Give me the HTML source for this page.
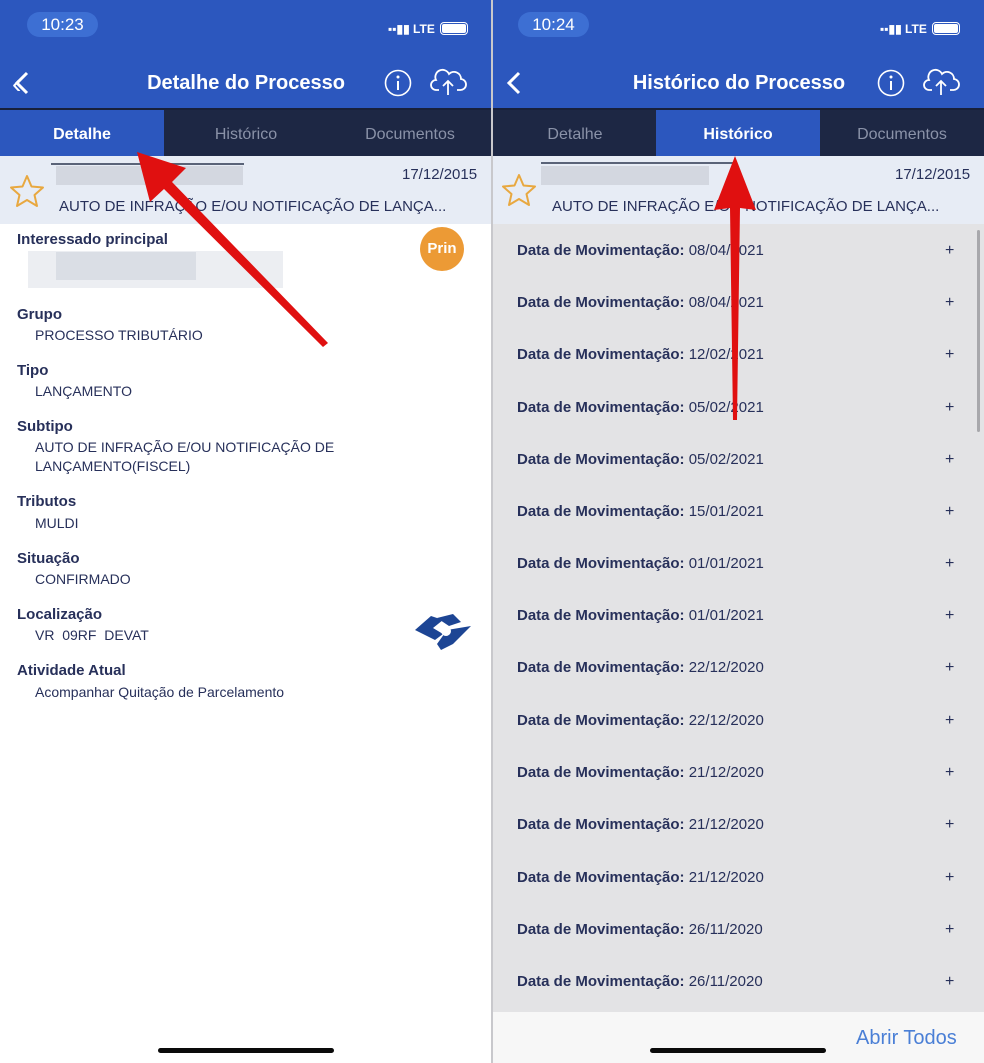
<!DOCTYPE html>
<html><head><meta charset="utf-8"><style>
*{margin:0;padding:0;box-sizing:border-box}
body{width:984px;height:1063px;overflow:hidden;background:#fff;font-family:"Liberation Sans",sans-serif;position:relative}
.p{position:absolute;top:0;width:492px;height:1063px;overflow:hidden}
.a{position:absolute}
.hdr{left:0;top:0;width:492px;height:110px;background:#2c57be}
.time{left:27px;top:12px;width:71px;height:25px;border-radius:13px;background:#3d6fd3;color:#fff;font-size:17px;text-align:center;line-height:25px}
.st{left:388px;top:22px;color:#fff;font-size:12px;font-weight:bold}
.bat{left:440px;top:22px;width:28px;height:13px;border:1.5px solid #fff;border-radius:4px;padding:1px}
.bat i{display:block;width:100%;height:100%;background:#fff;border-radius:2px}
.title{left:0;width:492px;top:72px;text-align:center;color:#fff;font-size:20px;font-weight:bold}
.tabs{left:0;top:108px;width:492px;height:48px;background:#1d2744;border-top:2px solid #18203a}
.tab{position:absolute;top:0;height:46px;width:164px;text-align:center;line-height:50px;font-size:16px;color:#8a92a8}
.tab.on{background:#2c57be;color:#fff;font-weight:bold}
.card{left:0;top:156px;width:492px;height:68px;background:#e7ecf5}
.blur{background:#d3d7e0}
.dk{color:#27305a}
.lab{position:absolute;left:17px;font-size:15px;font-weight:bold;color:#27305a}
.val{position:absolute;left:35px;font-size:14px;color:#27305a;line-height:19px}
.row{position:absolute;left:24px;font-size:15px;font-weight:bold;color:#27305a}
.plus{position:absolute;left:452px;font-size:16px;color:#27305a}
.home{position:absolute;top:1048px;width:176px;height:5px;border-radius:3px;background:#0a0a0a}
</style></head><body>

<div class="p" style="left:0">
 <div class="a hdr"></div>
 <div class="a time">10:23</div>
 <div class="a st">▪▪▮▮ LTE</div>
 <div class="a bat"><i></i></div>
 <div class="a" style="left:12px;top:68px;color:#fff;font-size:28px">&#8249;</div>
 <svg class="a" style="left:12px;top:70px" width="20" height="26"><path d="M15 3 L5 13 L15 23" stroke="#fff" stroke-width="3" fill="none"/></svg>
 <div class="a title">Detalhe do Processo</div>
 <svg class="a" style="left:383px;top:68px" width="30" height="30"><circle cx="15" cy="15" r="12.5" stroke="#fff" stroke-width="1.6" fill="none"/><circle cx="15" cy="9" r="1.5" fill="#fff"/><path d="M15 13v9" stroke="#fff" stroke-width="2"/></svg>
 <svg class="a" style="left:430px;top:67px" width="38" height="30"><path d="M9 23 H6 a5 5 0 0 1 0-10 a7 7 0 0 1 13-6 a7 7 0 0 1 12 5 a5.5 5.5 0 0 1 -1 11 H27" stroke="#fff" stroke-width="1.8" fill="none"/><path d="M18 28 V14 M13 19 l5-5 5 5" stroke="#fff" stroke-width="1.8" fill="none"/></svg>
 <div class="a tabs"><div class="tab on" style="left:0">Detalhe</div><div class="tab" style="left:164px">Histórico</div><div class="tab" style="left:328px">Documentos</div></div>
 <div class="a card"></div>
 <div class="a" style="left:51px;top:163px;width:193px;height:2px;background:#5a6378"></div>
 <div class="a blur" style="left:56px;top:166px;width:187px;height:19px"></div>
 <div class="a dk" style="left:402px;top:166px;font-size:15px">17/12/2015</div>
 <div class="a dk" style="left:59px;top:198px;font-size:15px">AUTO DE INFRAÇÃO E/OU NOTIFICAÇÃO DE LANÇA...</div>
 <svg class="a" style="left:8px;top:173px" width="38" height="36"><path d="M19 3 L23.5 13.5 L35 14.5 L26.5 22 L29 33 L19 27 L9 33 L11.5 22 L3 14.5 L14.5 13.5 Z" stroke="#e8a840" stroke-width="2" fill="none" stroke-linejoin="round"/></svg>
 <div class="lab" style="top:231px">Interessado principal</div>
 <div class="a" style="left:28px;top:251px;width:255px;height:37px;background:#eceef2"></div>
 <div class="a blur" style="left:56px;top:252px;width:140px;height:28px;opacity:.7"></div>
 <div class="a" style="left:420px;top:227px;width:44px;height:44px;border-radius:50%;background:#ec9a35;color:#fff;font-weight:bold;font-size:15px;text-align:center;line-height:44px">Prin</div>
 <div class="lab" style="top:306px">Grupo</div><div class="val" style="top:326px">PROCESSO TRIBUTÁRIO</div>
 <div class="lab" style="top:362px">Tipo</div><div class="val" style="top:382px">LANÇAMENTO</div>
 <div class="lab" style="top:418px">Subtipo</div><div class="val" style="top:438px">AUTO DE INFRAÇÃO E/OU NOTIFICAÇÃO DE<br>LANÇAMENTO(FISCEL)</div>
 <div class="lab" style="top:493px">Tributos</div><div class="val" style="top:514px">MULDI</div>
 <div class="lab" style="top:550px">Situação</div><div class="val" style="top:570px">CONFIRMADO</div>
 <div class="lab" style="top:606px">Localização</div><div class="val" style="top:626px">VR&nbsp; 09RF&nbsp; DEVAT</div>
 <div class="lab" style="top:662px">Atividade Atual</div><div class="val" style="top:683px">Acompanhar Quitação de Parcelamento</div>
 <svg class="a" style="left:413px;top:612px" width="60" height="40"><path d="M2 18 L18 4 L30 8 L20 16 L30 22 L22 28 Z" fill="#1d4594"/><path d="M24 6 L40 2 L48 10 L36 14 Z" fill="#1d4594"/><path d="M34 18 L58 14 L40 32 L28 38 L24 32 Z" fill="#1d4594"/><circle cx="33" cy="19" r="5" fill="#fff"/></svg>
 <div class="home" style="left:158px"></div>
</div>

<div class="a" style="left:491px;top:0;width:2px;height:1063px;background:#c8c8cc"></div>

<div class="p" style="left:493px;width:491px">
 <div class="a hdr"></div>
 <div class="a time" style="left:25px">10:24</div>
 <div class="a st" style="left:387px">▪▪▮▮ LTE</div>
 <div class="a bat" style="left:439px"><i></i></div>
 <svg class="a" style="left:11px;top:70px" width="20" height="26"><path d="M15 3 L5 13 L15 23" stroke="#fff" stroke-width="3" fill="none"/></svg>
 <div class="a title">Histórico do Processo</div>
 <svg class="a" style="left:383px;top:68px" width="30" height="30"><circle cx="15" cy="15" r="12.5" stroke="#fff" stroke-width="1.6" fill="none"/><circle cx="15" cy="9" r="1.5" fill="#fff"/><path d="M15 13v9" stroke="#fff" stroke-width="2"/></svg>
 <svg class="a" style="left:430px;top:67px" width="38" height="30"><path d="M9 23 H6 a5 5 0 0 1 0-10 a7 7 0 0 1 13-6 a7 7 0 0 1 12 5 a5.5 5.5 0 0 1 -1 11 H27" stroke="#fff" stroke-width="1.8" fill="none"/><path d="M18 28 V14 M13 19 l5-5 5 5" stroke="#fff" stroke-width="1.8" fill="none"/></svg>
 <div class="a tabs"><div class="tab" style="left:0">Detalhe</div><div class="tab on" style="left:163px">Histórico</div><div class="tab" style="left:327px">Documentos</div></div>
 <div class="a card"></div>
 <div class="a" style="left:48px;top:162px;width:193px;height:2px;background:#5a6378"></div>
 <div class="a blur" style="left:48px;top:166px;width:168px;height:19px"></div>
 <div class="a dk" style="left:402px;top:166px;font-size:15px">17/12/2015</div>
 <div class="a dk" style="left:59px;top:198px;font-size:15px">AUTO DE INFRAÇÃO E/OU NOTIFICAÇÃO DE LANÇA...</div>
 <svg class="a" style="left:7px;top:172px" width="38" height="36"><path d="M19 3 L23.5 13.5 L35 14.5 L26.5 22 L29 33 L19 27 L9 33 L11.5 22 L3 14.5 L14.5 13.5 Z" stroke="#e8a840" stroke-width="2" fill="none" stroke-linejoin="round"/></svg>
 <div class="a" style="left:0;top:224px;width:491px;height:788px;background:#e3e3e5"></div>
 <div class="a" style="left:484px;top:230px;width:3px;height:202px;border-radius:2px;background:#a8a8ac"></div>
 <div class="row" style="top:242px">Data de Movimentação: <span style="font-weight:normal">08/04/2021</span></div><div class="plus" style="top:242px">+</div>
 <div class="row" style="top:294px">Data de Movimentação: <span style="font-weight:normal">08/04/2021</span></div><div class="plus" style="top:294px">+</div>
 <div class="row" style="top:346px">Data de Movimentação: <span style="font-weight:normal">12/02/2021</span></div><div class="plus" style="top:346px">+</div>
 <div class="row" style="top:399px">Data de Movimentação: <span style="font-weight:normal">05/02/2021</span></div><div class="plus" style="top:399px">+</div>
 <div class="row" style="top:451px">Data de Movimentação: <span style="font-weight:normal">05/02/2021</span></div><div class="plus" style="top:451px">+</div>
 <div class="row" style="top:503px">Data de Movimentação: <span style="font-weight:normal">15/01/2021</span></div><div class="plus" style="top:503px">+</div>
 <div class="row" style="top:555px">Data de Movimentação: <span style="font-weight:normal">01/01/2021</span></div><div class="plus" style="top:555px">+</div>
 <div class="row" style="top:607px">Data de Movimentação: <span style="font-weight:normal">01/01/2021</span></div><div class="plus" style="top:607px">+</div>
 <div class="row" style="top:659px">Data de Movimentação: <span style="font-weight:normal">22/12/2020</span></div><div class="plus" style="top:659px">+</div>
 <div class="row" style="top:712px">Data de Movimentação: <span style="font-weight:normal">22/12/2020</span></div><div class="plus" style="top:712px">+</div>
 <div class="row" style="top:764px">Data de Movimentação: <span style="font-weight:normal">21/12/2020</span></div><div class="plus" style="top:764px">+</div>
 <div class="row" style="top:816px">Data de Movimentação: <span style="font-weight:normal">21/12/2020</span></div><div class="plus" style="top:816px">+</div>
 <div class="row" style="top:869px">Data de Movimentação: <span style="font-weight:normal">21/12/2020</span></div><div class="plus" style="top:869px">+</div>
 <div class="row" style="top:921px">Data de Movimentação: <span style="font-weight:normal">26/11/2020</span></div><div class="plus" style="top:921px">+</div>
 <div class="row" style="top:973px">Data de Movimentação: <span style="font-weight:normal">26/11/2020</span></div><div class="plus" style="top:973px">+</div>
 <div class="a" style="left:0;top:1012px;width:491px;height:51px;background:#f7f7f7"></div>
 <div class="a" style="left:363px;top:1027px;font-size:20px;color:#4a7fd6">Abrir Todos</div>
 <div class="home" style="left:157px"></div>
</div>

<svg class="a" style="left:0;top:0" width="984" height="1063">
 <path d="M137 152 L186 168 L172 182 L328 343 L323 347 L164 189 L150 202 Z" fill="#e01010"/>
 <path d="M735 156 L756 210 L740 208 L737 420 L733 420 L730 208 L714 210 Z" fill="#e01010"/>
</svg>
</body></html>
